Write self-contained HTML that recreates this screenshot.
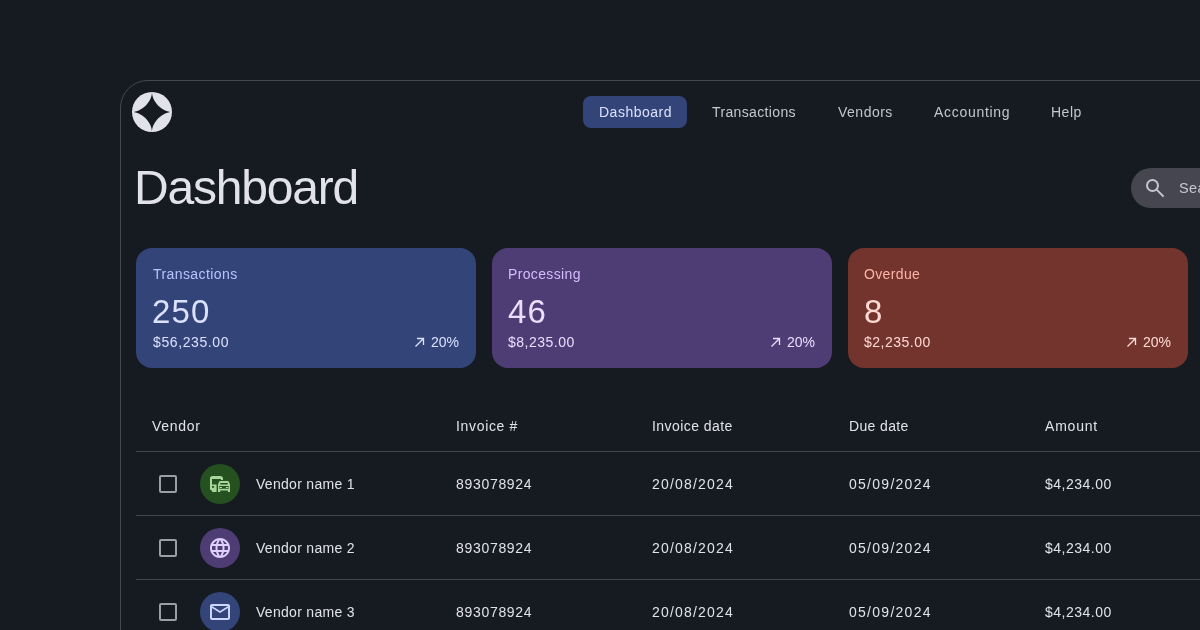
<!DOCTYPE html>
<html>
<head>
<meta charset="utf-8">
<style>
*{margin:0;padding:0;box-sizing:border-box}
html,body{width:1200px;height:630px;overflow:hidden;background:#161a21}
body{position:relative;font-family:"Liberation Sans",sans-serif;color:#e2e2e9}
.a{position:absolute;white-space:nowrap;line-height:1;will-change:transform}
.frame{position:absolute;left:120px;top:80px;width:1200px;height:700px;border:1px solid #47494e;border-radius:28px;background:#161a21}
.t14{font-size:14px;letter-spacing:0.4px}
.nav{color:#c5c6d0}
.chip{position:absolute;left:583px;top:96px;width:104px;height:32px;border-radius:8px;background:#334478}
.search{position:absolute;left:1131px;top:168px;width:200px;height:40px;border-radius:20px;background:#45464f}
.card{position:absolute;top:248px;width:340px;height:120px;border-radius:16px}
.div{position:absolute;left:136px;width:1064px;height:1px;background:#43464d}
.cb{position:absolute;left:159px;width:18px;height:18px;border:2px solid #9c9ea6;border-radius:2px}
.av{position:absolute;left:200px;width:40px;height:40px;border-radius:50%}
.av svg{position:absolute;left:8px;top:8px}
.dt{letter-spacing:1.2px}
</style>
</head>
<body>
<div class="frame"></div>

<!-- logo -->
<svg class="a" style="left:132px;top:92px" width="40" height="40" viewBox="0 0 40 40">
  <circle cx="20" cy="20" r="20" fill="#e2e2e9"/>
  <path id="star" fill="#161a21" d="M20 0 C20 9.7 30.3 20 40 20 C30.3 20 20 30.3 20 40 C20 30.3 9.7 20 0 20 C9.7 20 20 9.7 20 0Z"/></svg>

<!-- nav -->
<div class="chip"></div>
<div class="a t14" style="left:599px;top:105px;color:#dce1ff;letter-spacing:0.5px">Dashboard</div>
<div class="a t14 nav" style="left:712px;top:105px;letter-spacing:0.36px">Transactions</div>
<div class="a t14 nav" style="left:838px;top:105px;letter-spacing:0.5px">Vendors</div>
<div class="a t14 nav" style="left:934px;top:105px;letter-spacing:0.7px">Accounting</div>
<div class="a t14 nav" style="left:1051px;top:105px;letter-spacing:0.5px">Help</div>

<!-- heading -->
<div class="a" style="left:134px;top:164px;font-size:48px;letter-spacing:-1.2px;color:#e2e2e9">Dashboard</div>

<!-- search -->
<div class="search"></div>
<svg class="a" style="left:1143px;top:176px" width="24" height="24" viewBox="0 0 24 24"><circle cx="9.5" cy="9.5" r="5.5" stroke="#c5c6d0" stroke-width="2" fill="none"/><path d="M13.6 13.6 L20.6 20.6" stroke="#c5c6d0" stroke-width="2"/></svg>
<div class="a" style="left:1179px;top:181px;font-size:14.5px;color:#c5c6d0;letter-spacing:0.4px">Search</div>

<!-- cards -->
<div class="card" style="left:136px;background:#334478"></div>
<div class="card" style="left:492px;background:#4e3d74"></div>
<div class="card" style="left:848px;background:#73342d"></div>

<div class="a t14" style="left:152.5px;top:267px;color:#b7c4ff;letter-spacing:0.42px">Transactions</div>
<div class="a" style="left:152px;top:295px;font-size:33px;letter-spacing:1.2px;color:#dce1ff">250</div>
<div class="a t14" style="left:153px;top:335px;color:#dce1ff;letter-spacing:0.6px">$56,235.00</div>
<div class="a t14" style="left:431px;top:335px;color:#dce1ff;letter-spacing:0">20%</div>
<svg class="a" style="left:414px;top:337px" width="11" height="11" viewBox="0 0 11 11"><path d="M1.5 9.5 L9.5 1.5 M3 1.5 H9.5 V8" stroke="#dce1ff" stroke-width="1.3" fill="none"/></svg>

<div class="a t14" style="left:508px;top:267px;color:#d6bbff;letter-spacing:0.36px">Processing</div>
<div class="a" style="left:508px;top:295px;font-size:33px;letter-spacing:1.2px;color:#eaddff">46</div>
<div class="a t14" style="left:508px;top:335px;color:#eaddff;letter-spacing:0.5px">$8,235.00</div>
<div class="a t14" style="left:787px;top:335px;color:#eaddff;letter-spacing:0">20%</div>
<svg class="a" style="left:770px;top:337px" width="11" height="11" viewBox="0 0 11 11"><path d="M1.5 9.5 L9.5 1.5 M3 1.5 H9.5 V8" stroke="#eaddff" stroke-width="1.3" fill="none"/></svg>

<div class="a t14" style="left:864px;top:267px;color:#ffb4a9;letter-spacing:0.36px">Overdue</div>
<div class="a" style="left:864px;top:295px;font-size:33px;letter-spacing:1.2px;color:#ffdad5">8</div>
<div class="a t14" style="left:864px;top:335px;color:#ffdad5;letter-spacing:0.5px">$2,235.00</div>
<div class="a t14" style="left:1143px;top:335px;color:#ffdad5;letter-spacing:0">20%</div>
<svg class="a" style="left:1126px;top:337px" width="11" height="11" viewBox="0 0 11 11"><path d="M1.5 9.5 L9.5 1.5 M3 1.5 H9.5 V8" stroke="#ffdad5" stroke-width="1.3" fill="none"/></svg>

<!-- table header -->
<div class="a t14" style="left:152px;top:419px;letter-spacing:0.7px">Vendor</div>
<div class="a t14" style="left:456px;top:419px;letter-spacing:0.67px">Invoice #</div>
<div class="a t14" style="left:652px;top:419px;letter-spacing:0.44px">Invoice date</div>
<div class="a t14" style="left:849px;top:419px;letter-spacing:0.36px">Due date</div>
<div class="a t14" style="left:1045px;top:419px;letter-spacing:0.8px">Amount</div>
<div class="div" style="top:451px"></div>
<div class="div" style="top:515px"></div>
<div class="div" style="top:579px"></div>

<!-- rows placeholder -->
<div class="cb" style="top:475px"></div>
<div class="av" style="top:464px;background:#25501f"><svg width="24" height="24" viewBox="0 0 24 24"><path fill="#a8d69a" fill-rule="evenodd" d="M1.95 17V6.6Q1.95 4.06 4.5 4.06H12.4Q15 4.06 15 6.6V7.9H13V7.08H4V12.5H8.6V19.9H4.1V18.9L1.95 17.2ZM4 14.1V15.8H6.1V14.1Z M10 20V12.6L11.1 9.8Q11.5 9.05 12.3 9.05H19.7Q20.5 9.05 20.9 9.8L22 12.6V20H19.9V18.4H12.2V20Z M12.3 11H19.7V12.5H12.3Z M11.3 14.1H20.7V16.7H11.3Z M11.8 14.9H14V16H11.8Z M17.9 14.9H20.2V16H17.9Z"/></svg></div>
<div class="a t14" style="left:256px;top:477px;letter-spacing:0.3px">Vendor name 1</div>
<div class="a t14" style="left:456px;top:477px;letter-spacing:0.69px">893078924</div>
<div class="a t14 dt" style="left:652px;top:477px">20/08/2024</div>
<div class="a t14 dt" style="left:849px;top:477px;letter-spacing:1.27px">05/09/2024</div>
<div class="a t14" style="left:1045px;top:477px;letter-spacing:0.5px">$4,234.00</div>
<div class="cb" style="top:539px"></div>
<div class="av" style="top:528px;background:#4e3d74"><svg width="24" height="24" viewBox="0 0 24 24"><path fill="#ddd0ff" d="M11.99 2C6.47 2 2 6.48 2 12s4.47 10 9.990 10C17.52 22 22 17.52 22 12S17.52 2 11.99 2zm6.93 6h-2.95c-.32-1.25-.78-2.45-1.38-3.56 1.84.63 3.37 1.91 4.33 3.56zM12 4.04c.83 1.2 1.48 2.53 1.91 3.96h-3.82c.43-1.43 1.08-2.76 1.91-3.96zM4.26 14C4.1 13.36 4 12.69 4 12s.1-1.36.26-2h3.38c-.08.66-.14 1.32-.14 2 0 .68.06 1.34.14 2H4.26zm.82 2h2.95c.32 1.25.78 2.45 1.38 3.56-1.84-.63-3.37-1.9-4.33-3.56zm2.95-8H5.08c.96-1.66 2.49-2.93 4.33-3.56C8.81 5.55 8.35 6.75 8.03 8zM12 19.96c-.83-1.2-1.48-2.53-1.91-3.96h3.82c-.43 1.43-1.08 2.76-1.91 3.96zM14.34 14H9.66c-.09-.66-.16-1.32-.16-2 0-.68.07-1.35.16-2h4.68c.09.65.16 1.32.16 2 0 .68-.07 1.34-.16 2zm.25 5.56c.6-1.11 1.06-2.31 1.38-3.56h2.95c-.96 1.65-2.49 2.93-4.33 3.56zM16.36 14c.08-.66.14-1.32.14-2 0-.68-.06-1.34-.14-2h3.38c.16.64.26 1.31.26 2s-.1 1.36-.26 2h-3.38z"/></svg></div>
<div class="a t14" style="left:256px;top:541px;letter-spacing:0.3px">Vendor name 2</div>
<div class="a t14" style="left:456px;top:541px;letter-spacing:0.69px">893078924</div>
<div class="a t14 dt" style="left:652px;top:541px">20/08/2024</div>
<div class="a t14 dt" style="left:849px;top:541px;letter-spacing:1.27px">05/09/2024</div>
<div class="a t14" style="left:1045px;top:541px;letter-spacing:0.5px">$4,234.00</div>
<div class="cb" style="top:603px"></div>
<div class="av" style="top:592px;background:#334478"><svg width="24" height="24" viewBox="0 0 24 24"><path fill="#cdd6ff" d="M22 6c0-1.1-.9-2-2-2H4c-1.1 0-2 .9-2 2v12c0 1.1.9 2 2 2h16c1.1 0 2-.9 2-2V6zm-2 0l-8 5-8-5h16zm0 12H4V8l8 5 8-5v10z"/></svg></div>
<div class="a t14" style="left:256px;top:605px;letter-spacing:0.3px">Vendor name 3</div>
<div class="a t14" style="left:456px;top:605px;letter-spacing:0.69px">893078924</div>
<div class="a t14 dt" style="left:652px;top:605px">20/08/2024</div>
<div class="a t14 dt" style="left:849px;top:605px;letter-spacing:1.27px">05/09/2024</div>
<div class="a t14" style="left:1045px;top:605px;letter-spacing:0.5px">$4,234.00</div>
</body>
</html>
